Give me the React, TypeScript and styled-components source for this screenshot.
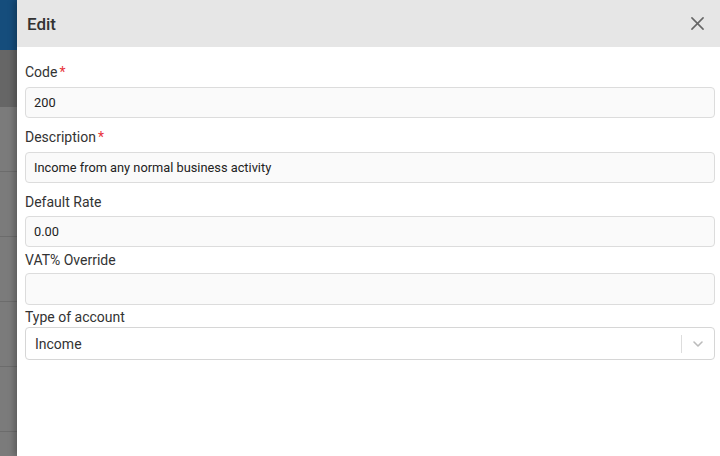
import React from 'react';
import styled, { createGlobalStyle } from 'styled-components';

const GlobalStyle = createGlobalStyle`
  html, body {
    margin: 0;
    padding: 0;
    height: 100%;
    overflow: hidden;
  }
  body {
    font-family: Roboto, 'Liberation Sans', Arial, sans-serif;
  }
  #root {
    height: 100%;
  }
`;

const Page = styled.div`
  position: relative;
  height: 456px;
  background: #f5f5f5;
  overflow: hidden;
`;

const TopBar = styled.div`
  height: 50px;
  background: #2b9bf8;
`;

const Toolbar = styled.div`
  height: 57px;
  background: #cdcdcd;
`;

const TableRow = styled.div`
  height: 64px;
  border-bottom: 1px solid #d8d8d8;
  background: #f6f6f6;
`;

const Backdrop = styled.div`
  position: absolute;
  inset: 0;
  background: rgba(0, 0, 0, 0.5);
`;

const Drawer = styled.aside`
  position: absolute;
  top: 0;
  bottom: 0;
  left: 17px;
  right: 0;
  background: #fff;
  display: flex;
  flex-direction: column;
  box-shadow: -3px 0 6px rgba(0, 0, 0, 0.25);
`;

const DrawerHeader = styled.header`
  height: 47px;
  flex-shrink: 0;
  background: #e6e6e6;
  display: flex;
  align-items: center;
  justify-content: space-between;
  padding: 0 16px 0 10px;
`;

const Title = styled.h2`
  margin: 0;
  font-size: 17px;
  font-weight: 500;
  color: #333;
`;

const CloseButton = styled.button`
  border: 0;
  background: transparent;
  padding: 0;
  width: 14px;
  height: 14px;
  display: flex;
  align-items: center;
  justify-content: center;
  cursor: pointer;
  color: #666;
`;

const Form = styled.form`
  display: flex;
  flex-direction: column;
  padding: 15px 5px 0 8px;
`;

const Field = styled.div<{ $top: number }>`
  display: flex;
  flex-direction: column;
  margin-top: ${(p) => p.$top}px;
`;

const Label = styled.label<{ $gap: number }>`
  font-size: 14px;
  line-height: 20px;
  color: #333;
  margin-bottom: ${(p) => p.$gap}px;
`;

const Star = styled.span`
  color: #e8333a;
  margin-left: 2px;
`;

const TextInput = styled.input<{ $height?: number }>`
  box-sizing: border-box;
  height: ${(p) => p.$height ?? 31}px;
  width: 100%;
  border: 1px solid #dcdcdc;
  border-radius: 4px;
  background: #fafafa;
  padding: 0 8px;
  font-family: inherit;
  font-size: 12.8px;
  color: #222;
  outline: none;
`;

const Select = styled.div`
  box-sizing: border-box;
  height: 33px;
  border: 1px solid #d6d6d6;
  border-radius: 4px;
  background: #fff;
  display: flex;
  align-items: center;
`;

const SelectValue = styled.span`
  flex: 1;
  padding-left: 9px;
  font-size: 14px;
  color: #333;
`;

const Separator = styled.span`
  width: 1px;
  height: 18px;
  background: #ddd;
`;

const Chevron = styled.span`
  width: 32px;
  display: flex;
  align-items: center;
  justify-content: center;
  color: #bbb;
`;

type FieldDef = {
  label: string;
  value: string;
  required?: boolean;
  top: number;
  gap: number;
  height?: number;
};

const fields: FieldDef[] = [
  { label: 'Code', value: '200', required: true, top: 0, gap: 5 },
  { label: 'Description', value: 'Income from any normal business activity', required: true, top: 9, gap: 5 },
  { label: 'Default Rate', value: '0.00', top: 9, gap: 4 },
  { label: 'VAT% Override', value: '', top: 3, gap: 3, height: 32 },
];

const App: React.FC = () => {
  return (
    <>
      <GlobalStyle />
      <Page>
        <TopBar />
        <Toolbar />
        {[0, 1, 2, 3, 4, 5].map((i) => (
          <TableRow key={i} />
        ))}
        <Backdrop />
        <Drawer>
          <DrawerHeader>
            <Title>Edit</Title>
            <CloseButton type="button" aria-label="Close">
              <svg width="13" height="13" viewBox="0 0 14 14">
                <path d="M1 1 L13 13 M13 1 L1 13" stroke="currentColor" strokeWidth="1.7" strokeLinecap="round" />
              </svg>
            </CloseButton>
          </DrawerHeader>
          <Form onSubmit={(e) => e.preventDefault()}>
            {fields.map((f) => (
              <Field key={f.label} $top={f.top}>
                <Label $gap={f.gap}>
                  {f.label}
                  {f.required && <Star>*</Star>}
                </Label>
                <TextInput defaultValue={f.value} $height={f.height} />
              </Field>
            ))}
            <Field $top={2}>
              <Label $gap={0}>Type of account</Label>
              <Select>
                <SelectValue>Income</SelectValue>
                <Separator />
                <Chevron>
                  <svg width="12" height="8" viewBox="0 0 12 8">
                    <path d="M2 2 L6 6 L10 2" fill="none" stroke="currentColor" strokeWidth="1.6" strokeLinecap="round" strokeLinejoin="round" />
                  </svg>
                </Chevron>
              </Select>
            </Field>
          </Form>
        </Drawer>
      </Page>
    </>
  );
};

export default App;
